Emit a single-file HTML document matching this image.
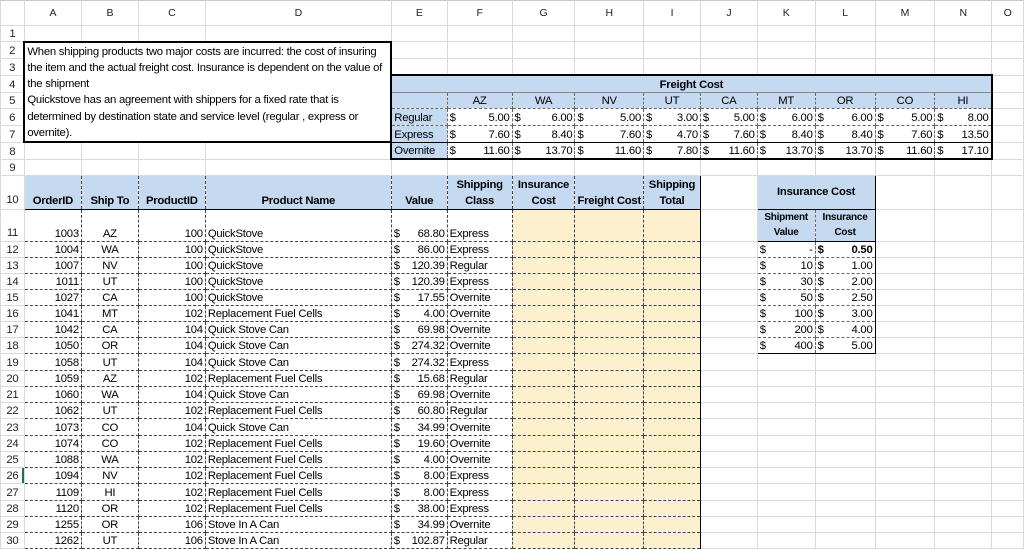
<!DOCTYPE html>
<html><head><meta charset="utf-8"><style>
html,body{margin:0;padding:0;background:#fff;width:1024px;height:547px;overflow:hidden}
table{border-collapse:collapse;table-layout:fixed;position:absolute;left:0;top:0;font-family:"Liberation Sans",sans-serif;font-size:11.3px;letter-spacing:-0.25px;color:#000}
td{border:1px solid #dadada;padding:0 2px;white-space:nowrap;overflow:hidden;vertical-align:bottom;line-height:13px}
tr.h td{text-align:center;vertical-align:middle;color:#222;font-size:10.5px;border-top:1px solid #c8c8c8}
td.n{text-align:center;color:#222;padding:0}
.b{background:#c5d9f0}
.y{background:#fcf0cf}
.m{border:1px dashed #444}
.f{border:1px dashed #666}
.ac div{display:flex;justify-content:space-between}
.r{text-align:right}.c{text-align:center}
.bd{font-weight:bold}
td.box{border:2px solid #000;vertical-align:top;padding:1px 2px 0 2px;line-height:16.3px;white-space:nowrap}
.T{border-top:2px solid #000}.B{border-bottom:2px solid #000}.L{border-left:2px solid #000}.R{border-right:2px solid #000}
.t1{border-top:1px solid #000}.b1{border-bottom:1px solid #000}.l1{border-left:1px solid #000}.r1{border-right:1px solid #000}
.hd{font-weight:bold;text-align:center;line-height:16px}
.sm{font-size:10px;line-height:15px;vertical-align:middle}
.g{color:#217346;box-shadow:inset -2px 0 0 #217346}
</style></head><body>
<table>
<colgroup><col style="width:24px"><col style="width:57px"><col style="width:57px"><col style="width:67px"><col style="width:186px"><col style="width:56px"><col style="width:65px"><col style="width:63px"><col style="width:68px"><col style="width:57px"><col style="width:57px"><col style="width:58px"><col style="width:60px"><col style="width:60px"><col style="width:57px"><col style="width:32px"></colgroup>
<tr class="h" style="height:25px"><td></td><td>A</td><td>B</td><td>C</td><td>D</td><td>E</td><td>F</td><td>G</td><td>H</td><td>I</td><td>J</td><td>K</td><td>L</td><td>M</td><td>N</td><td>O</td></tr>
<tr style="height:16px"><td class="n">1</td><td></td><td></td><td></td><td></td><td></td><td></td><td></td><td></td><td></td><td></td><td></td><td></td><td></td><td></td><td></td></tr>
<tr style="height:17px"><td class="n">2</td><td class="box" colspan="4" rowspan="6">When shipping products two major costs are incurred: the cost of insuring<br>the item and the actual freight cost. Insurance is dependent on the value of<br>the shipment<br>Quickstove has an agreement with shippers for a fixed rate that is<br>determined by destination state and service level (regular , express or<br>overnite).</td><td></td><td></td><td></td><td></td><td></td><td></td><td></td><td></td><td></td><td></td><td></td></tr>
<tr style="height:16px"><td class="n">3</td><td></td><td></td><td></td><td></td><td></td><td></td><td></td><td></td><td></td><td></td><td></td></tr>
<tr style="height:17px"><td class="n">4</td><td class="b T L R bd c" colspan="10" style="border-bottom:1px solid #888">Freight Cost</td><td></td></tr>
<tr style="height:16px"><td class="n">5</td><td class="b f L"></td><td class="b f c">AZ</td><td class="b f c">WA</td><td class="b f c">NV</td><td class="b f c">UT</td><td class="b f c">CA</td><td class="b f c">MT</td><td class="b f c">OR</td><td class="b f c">CO</td><td class="b f c R">HI</td><td></td></tr>
<tr style="height:17px"><td class="n">6</td><td class="b f L">Regular</td><td class="f ac"><div><span>$</span><span>5.00</span></div></td><td class="f ac"><div><span>$</span><span>6.00</span></div></td><td class="f ac"><div><span>$</span><span>5.00</span></div></td><td class="f ac"><div><span>$</span><span>3.00</span></div></td><td class="f ac"><div><span>$</span><span>5.00</span></div></td><td class="f ac"><div><span>$</span><span>6.00</span></div></td><td class="f ac"><div><span>$</span><span>6.00</span></div></td><td class="f ac"><div><span>$</span><span>5.00</span></div></td><td class="f ac R"><div><span>$</span><span>8.00</span></div></td><td></td></tr>
<tr style="height:16px"><td class="n">7</td><td class="b f L">Express</td><td class="f ac"><div><span>$</span><span>7.60</span></div></td><td class="f ac"><div><span>$</span><span>8.40</span></div></td><td class="f ac"><div><span>$</span><span>7.60</span></div></td><td class="f ac"><div><span>$</span><span>4.70</span></div></td><td class="f ac"><div><span>$</span><span>7.60</span></div></td><td class="f ac"><div><span>$</span><span>8.40</span></div></td><td class="f ac"><div><span>$</span><span>8.40</span></div></td><td class="f ac"><div><span>$</span><span>7.60</span></div></td><td class="f ac R"><div><span>$</span><span>13.50</span></div></td><td></td></tr>
<tr style="height:17px"><td class="n">8</td><td></td><td></td><td></td><td></td><td class="b f L B t1">Overnite</td><td class="f ac B t1"><div><span>$</span><span>11.60</span></div></td><td class="f ac B t1"><div><span>$</span><span>13.70</span></div></td><td class="f ac B t1"><div><span>$</span><span>11.60</span></div></td><td class="f ac B t1"><div><span>$</span><span>7.80</span></div></td><td class="f ac B t1"><div><span>$</span><span>11.60</span></div></td><td class="f ac B t1"><div><span>$</span><span>13.70</span></div></td><td class="f ac B t1"><div><span>$</span><span>13.70</span></div></td><td class="f ac B t1"><div><span>$</span><span>11.60</span></div></td><td class="f ac R B t1"><div><span>$</span><span>17.10</span></div></td><td></td></tr>
<tr style="height:16px"><td class="n">9</td><td></td><td></td><td></td><td></td><td></td><td></td><td></td><td></td><td></td><td></td><td></td><td></td><td></td><td></td><td></td></tr>
<tr style="height:34px"><td class="n" style="vertical-align:bottom;padding-bottom:2px">10</td><td class="b m hd t1 b1">OrderID</td><td class="b m hd t1 b1">Ship To</td><td class="b m hd t1 b1">ProductID</td><td class="b m hd t1 b1">Product Name</td><td class="b m hd t1 b1">Value</td><td class="b m hd t1 b1">Shipping<br>Class</td><td class="b m hd t1 b1">Insurance<br>Cost</td><td class="b m hd t1 b1">Freight Cost</td><td class="b m hd t1 b1 r1">Shipping<br>Total</td><td></td><td class="b hd t1 b1 l1 r1" colspan="2" style="vertical-align:middle">Insurance Cost</td><td></td><td></td><td></td></tr>
<tr style="height:32px"><td class="n" style="padding-bottom:1px">11</td><td class="m r">1003</td><td class="m c">AZ</td><td class="m r">100</td><td class="m">QuickStove</td><td class="m ac"><div><span>$</span><span>68.80</span></div></td><td class="m">Express</td><td class="m y"></td><td class="m y"></td><td class="m y r1"></td><td></td><td class="b f hd sm l1 b1">Shipment<br>Value</td><td class="b f hd sm r1 b1">Insurance<br>Cost</td><td></td><td></td><td></td></tr>
<tr style="height:16px"><td class="n">12</td><td class="m r">1004</td><td class="m c">WA</td><td class="m r">100</td><td class="m">QuickStove</td><td class="m ac"><div><span>$</span><span>86.00</span></div></td><td class="m">Express</td><td class="m y"></td><td class="m y"></td><td class="m y r1"></td><td></td><td class="f ac l1"><div><span>$</span><span>-</span></div></td><td class="f ac r1 bd"><div><span>$</span><span>0.50</span></div></td><td></td><td></td><td></td></tr>
<tr style="height:16px"><td class="n">13</td><td class="m r">1007</td><td class="m c">NV</td><td class="m r">100</td><td class="m">QuickStove</td><td class="m ac"><div><span>$</span><span>120.39</span></div></td><td class="m">Regular</td><td class="m y"></td><td class="m y"></td><td class="m y r1"></td><td></td><td class="f ac l1"><div><span>$</span><span>10</span></div></td><td class="f ac r1"><div><span>$</span><span>1.00</span></div></td><td></td><td></td><td></td></tr>
<tr style="height:16px"><td class="n">14</td><td class="m r">1011</td><td class="m c">UT</td><td class="m r">100</td><td class="m">QuickStove</td><td class="m ac"><div><span>$</span><span>120.39</span></div></td><td class="m">Express</td><td class="m y"></td><td class="m y"></td><td class="m y r1"></td><td></td><td class="f ac l1"><div><span>$</span><span>30</span></div></td><td class="f ac r1"><div><span>$</span><span>2.00</span></div></td><td></td><td></td><td></td></tr>
<tr style="height:16px"><td class="n">15</td><td class="m r">1027</td><td class="m c">CA</td><td class="m r">100</td><td class="m">QuickStove</td><td class="m ac"><div><span>$</span><span>17.55</span></div></td><td class="m">Overnite</td><td class="m y"></td><td class="m y"></td><td class="m y r1"></td><td></td><td class="f ac l1"><div><span>$</span><span>50</span></div></td><td class="f ac r1"><div><span>$</span><span>2.50</span></div></td><td></td><td></td><td></td></tr>
<tr style="height:16px"><td class="n">16</td><td class="m r">1041</td><td class="m c">MT</td><td class="m r">102</td><td class="m">Replacement Fuel Cells</td><td class="m ac"><div><span>$</span><span>4.00</span></div></td><td class="m">Overnite</td><td class="m y"></td><td class="m y"></td><td class="m y r1"></td><td></td><td class="f ac l1"><div><span>$</span><span>100</span></div></td><td class="f ac r1"><div><span>$</span><span>3.00</span></div></td><td></td><td></td><td></td></tr>
<tr style="height:16px"><td class="n">17</td><td class="m r">1042</td><td class="m c">CA</td><td class="m r">104</td><td class="m">Quick Stove Can</td><td class="m ac"><div><span>$</span><span>69.98</span></div></td><td class="m">Overnite</td><td class="m y"></td><td class="m y"></td><td class="m y r1"></td><td></td><td class="f ac l1"><div><span>$</span><span>200</span></div></td><td class="f ac r1"><div><span>$</span><span>4.00</span></div></td><td></td><td></td><td></td></tr>
<tr style="height:16px"><td class="n">18</td><td class="m r">1050</td><td class="m c">OR</td><td class="m r">104</td><td class="m">Quick Stove Can</td><td class="m ac"><div><span>$</span><span>274.32</span></div></td><td class="m">Overnite</td><td class="m y"></td><td class="m y"></td><td class="m y r1"></td><td></td><td class="f ac l1 b1"><div><span>$</span><span>400</span></div></td><td class="f ac r1 b1"><div><span>$</span><span>5.00</span></div></td><td></td><td></td><td></td></tr>
<tr style="height:17px"><td class="n">19</td><td class="m r">1058</td><td class="m c">UT</td><td class="m r">104</td><td class="m">Quick Stove Can</td><td class="m ac"><div><span>$</span><span>274.32</span></div></td><td class="m">Express</td><td class="m y"></td><td class="m y"></td><td class="m y r1"></td><td></td><td></td><td></td><td></td><td></td><td></td></tr>
<tr style="height:16px"><td class="n">20</td><td class="m r">1059</td><td class="m c">AZ</td><td class="m r">102</td><td class="m">Replacement Fuel Cells</td><td class="m ac"><div><span>$</span><span>15.68</span></div></td><td class="m">Regular</td><td class="m y"></td><td class="m y"></td><td class="m y r1"></td><td></td><td></td><td></td><td></td><td></td><td></td></tr>
<tr style="height:16px"><td class="n">21</td><td class="m r">1060</td><td class="m c">WA</td><td class="m r">104</td><td class="m">Quick Stove Can</td><td class="m ac"><div><span>$</span><span>69.98</span></div></td><td class="m">Overnite</td><td class="m y"></td><td class="m y"></td><td class="m y r1"></td><td></td><td></td><td></td><td></td><td></td><td></td></tr>
<tr style="height:16px"><td class="n">22</td><td class="m r">1062</td><td class="m c">UT</td><td class="m r">102</td><td class="m">Replacement Fuel Cells</td><td class="m ac"><div><span>$</span><span>60.80</span></div></td><td class="m">Regular</td><td class="m y"></td><td class="m y"></td><td class="m y r1"></td><td></td><td></td><td></td><td></td><td></td><td></td></tr>
<tr style="height:17px"><td class="n">23</td><td class="m r">1073</td><td class="m c">CO</td><td class="m r">104</td><td class="m">Quick Stove Can</td><td class="m ac"><div><span>$</span><span>34.99</span></div></td><td class="m">Overnite</td><td class="m y"></td><td class="m y"></td><td class="m y r1"></td><td></td><td></td><td></td><td></td><td></td><td></td></tr>
<tr style="height:16px"><td class="n">24</td><td class="m r">1074</td><td class="m c">CO</td><td class="m r">102</td><td class="m">Replacement Fuel Cells</td><td class="m ac"><div><span>$</span><span>19.60</span></div></td><td class="m">Overnite</td><td class="m y"></td><td class="m y"></td><td class="m y r1"></td><td></td><td></td><td></td><td></td><td></td><td></td></tr>
<tr style="height:16px"><td class="n">25</td><td class="m r">1088</td><td class="m c">WA</td><td class="m r">102</td><td class="m">Replacement Fuel Cells</td><td class="m ac"><div><span>$</span><span>4.00</span></div></td><td class="m">Overnite</td><td class="m y"></td><td class="m y"></td><td class="m y r1"></td><td></td><td></td><td></td><td></td><td></td><td></td></tr>
<tr style="height:16px"><td class="n g">26</td><td class="m r">1094</td><td class="m c">NV</td><td class="m r">102</td><td class="m">Replacement Fuel Cells</td><td class="m ac"><div><span>$</span><span>8.00</span></div></td><td class="m">Express</td><td class="m y"></td><td class="m y"></td><td class="m y r1"></td><td></td><td></td><td></td><td></td><td></td><td></td></tr>
<tr style="height:17px"><td class="n">27</td><td class="m r">1109</td><td class="m c">HI</td><td class="m r">102</td><td class="m">Replacement Fuel Cells</td><td class="m ac"><div><span>$</span><span>8.00</span></div></td><td class="m">Express</td><td class="m y"></td><td class="m y"></td><td class="m y r1"></td><td></td><td></td><td></td><td></td><td></td><td></td></tr>
<tr style="height:16px"><td class="n">28</td><td class="m r">1120</td><td class="m c">OR</td><td class="m r">102</td><td class="m">Replacement Fuel Cells</td><td class="m ac"><div><span>$</span><span>38.00</span></div></td><td class="m">Express</td><td class="m y"></td><td class="m y"></td><td class="m y r1"></td><td></td><td></td><td></td><td></td><td></td><td></td></tr>
<tr style="height:16px"><td class="n">29</td><td class="m r">1255</td><td class="m c">OR</td><td class="m r">106</td><td class="m">Stove In A Can</td><td class="m ac"><div><span>$</span><span>34.99</span></div></td><td class="m">Overnite</td><td class="m y"></td><td class="m y"></td><td class="m y r1"></td><td></td><td></td><td></td><td></td><td></td><td></td></tr>
<tr style="height:16px"><td class="n">30</td><td class="m r">1262</td><td class="m c">UT</td><td class="m r">106</td><td class="m">Stove In A Can</td><td class="m ac"><div><span>$</span><span>102.87</span></div></td><td class="m">Regular</td><td class="m y"></td><td class="m y"></td><td class="m y r1"></td><td></td><td></td><td></td><td></td><td></td><td></td></tr>
</table>
</body></html>
